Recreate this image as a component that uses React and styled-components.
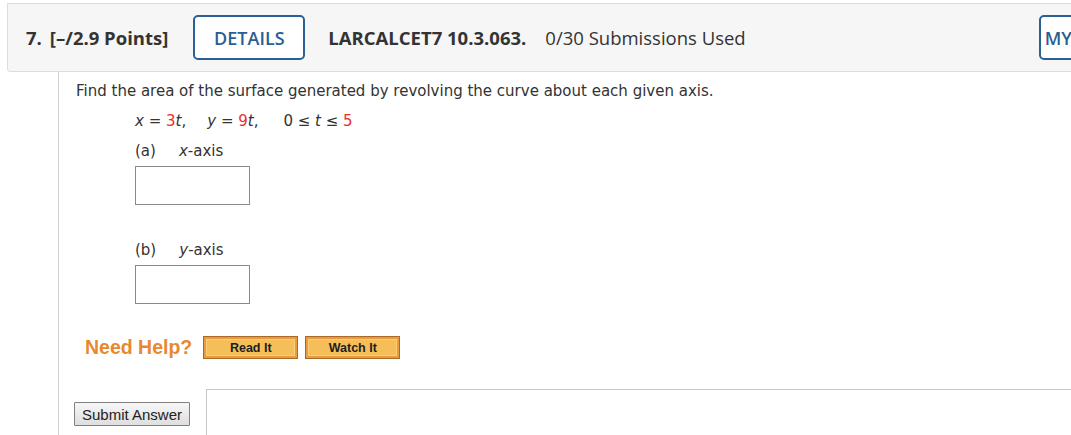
import React from "react";
import styled, { createGlobalStyle } from "styled-components";

const Global = createGlobalStyle`
  html, body {
    margin: 0;
    padding: 0;
    background: #fff;
    overflow: hidden;
  }
  body {
    width: 1071px;
    height: 435px;
  }
`;

const Page = styled.div`
  padding: 3px 0 0 7px;
  height: 432px;
  display: flex;
  flex-direction: column;
`;

const Header = styled.div`
  box-sizing: border-box;
  width: 1200px;
  height: 69px;
  display: flex;
  align-items: center;
  padding-left: 18px;
  background: #f6f6f6;
  border: 1px solid #dcdcdc;
  border-radius: 0 0 0 3px;
  font-family: "Open Sans", sans-serif;
  font-size: 18.5px;
  color: #333;
`;

const Num = styled.span`
  font-weight: 700;
  margin-right: 8px;
`;

const Bold = styled.span`
  font-weight: 700;
`;

const OutlineBtn = styled.button`
  box-sizing: border-box;
  flex-shrink: 0;
  width: ${(p) => p.$w || 112}px;
  height: 45px;
  margin-left: ${(p) => p.$ml || 0}px;
  border: 2px solid #2b6096;
  border-radius: 5px;
  background: #fff;
  font-family: "Open Sans", sans-serif;
  font-size: 18px;
  font-weight: 600;
  color: #2b5e91;
  padding: 0;
  text-align: ${(p) => p.$align || "center"};
  padding-left: ${(p) => p.$pl || 0}px;
  white-space: nowrap;
  overflow: hidden;
`;

const Code = styled.span`
  font-weight: 700;
  margin-left: 23px;
`;

const Subs = styled.span`
  margin-left: 19px;
`;

const Body = styled.div`
  flex: 1;
  margin-left: 51px;
  border-left: 1px solid #cfcfcf;
  padding: 9px 0 0 17px;
  font-family: "DejaVu Sans", Verdana, sans-serif;
  font-size: 15px;
  color: #333;
  display: flex;
  flex-direction: column;
`;

const Prompt = styled.div`
  line-height: 20px;
`;

const Indent = styled.div`
  padding-left: 59px;
  display: flex;
  flex-direction: column;
`;

const MathLine = styled.div`
  margin-top: 10px;
  line-height: 20px;
`;

const Var = styled.i`
  font-style: italic;
`;

const Red = styled.span`
  color: #e4322b;
`;

const Gap = styled.span`
  display: inline-block;
  width: ${(p) => p.$w}px;
`;

const PartLabel = styled.div`
  margin-top: ${(p) => p.$mt}px;
  line-height: 20px;
`;

const AnswerBox = styled.input`
  box-sizing: border-box;
  margin-top: 5px;
  width: 115px;
  height: 39px;
  border: 1px solid #8a8a8a;
  background: #fff;
  outline: none;
`;

const HelpRow = styled.div`
  display: flex;
  align-items: center;
  margin-top: 32px;
  padding-left: 9px;
`;

const HelpText = styled.span`
  font-family: "Liberation Sans", Arial, sans-serif;
  font-weight: 700;
  font-size: 19.5px;
  color: #e8892f;
  margin-right: 11px;
`;

const OrangeBtn = styled.button`
  box-sizing: border-box;
  width: 95px;
  height: 23px;
  margin-right: 7px;
  padding: 0;
  border: 1px solid #a8692c;
  background: #f5be58;
  box-shadow: inset 0 0 0 2px #eb9a3c, inset 0 0 0 3px #f9d07a;
  font-family: "Liberation Sans", Arial, sans-serif;
  font-weight: 700;
  font-size: 12.5px;
  color: #1e1e1e;
`;

const SubmitRow = styled.div`
  flex: 1;
  display: flex;
  margin-top: 30px;
  margin-left: -2px;
`;

const SubmitBtn = styled.button`
  box-sizing: border-box;
  align-self: flex-start;
  margin-top: 13px;
  width: 116px;
  height: 24px;
  padding: 0;
  border: 1px solid #808080;
  border-radius: 1px;
  background: linear-gradient(#f7f7f7, #dedede);
  font-family: "Liberation Sans", Arial, sans-serif;
  font-size: 15px;
  color: #222;
`;

const ResultPanel = styled.div`
  flex: 1;
  margin-left: 16px;
  border-top: 1px solid #c8c8c8;
  border-left: 1px solid #c8c8c8;
`;

export default function App() {
  return (
    <>
      <Global />
      <Page>
        <Header>
          <Num>7.</Num>
          <Bold>[–/2.9 Points]</Bold>
          <OutlineBtn $ml={25}>DETAILS</OutlineBtn>
          <Code>LARCALCET7 10.3.063.</Code>
          <Subs>0/30 Submissions Used</Subs>
          <OutlineBtn $ml={293} $w={112} $align="left" $pl={4}>
            MY NOTES
          </OutlineBtn>
        </Header>
        <Body>
          <Prompt>
            Find the area of the surface generated by revolving the curve about
            each given axis.
          </Prompt>
          <Indent>
            <MathLine>
              <Var>x</Var> = <Red>3</Red>
              <Var>t</Var>,<Gap $w={21} />
              <Var>y</Var> = <Red>9</Red>
              <Var>t</Var>,<Gap $w={25} />0 ≤ <Var>t</Var> ≤ <Red>5</Red>
            </MathLine>
            <PartLabel $mt={10}>
              (a)<Gap $w={23} />
              <Var>x</Var>-axis
            </PartLabel>
            <AnswerBox />
            <PartLabel $mt={35}>
              (b)<Gap $w={23} />
              <Var>y</Var>-axis
            </PartLabel>
            <AnswerBox />
          </Indent>
          <HelpRow>
            <HelpText>Need Help?</HelpText>
            <OrangeBtn>Read It</OrangeBtn>
            <OrangeBtn>Watch It</OrangeBtn>
          </HelpRow>
          <SubmitRow>
            <SubmitBtn>Submit Answer</SubmitBtn>
            <ResultPanel />
          </SubmitRow>
        </Body>
      </Page>
    </>
  );
}
